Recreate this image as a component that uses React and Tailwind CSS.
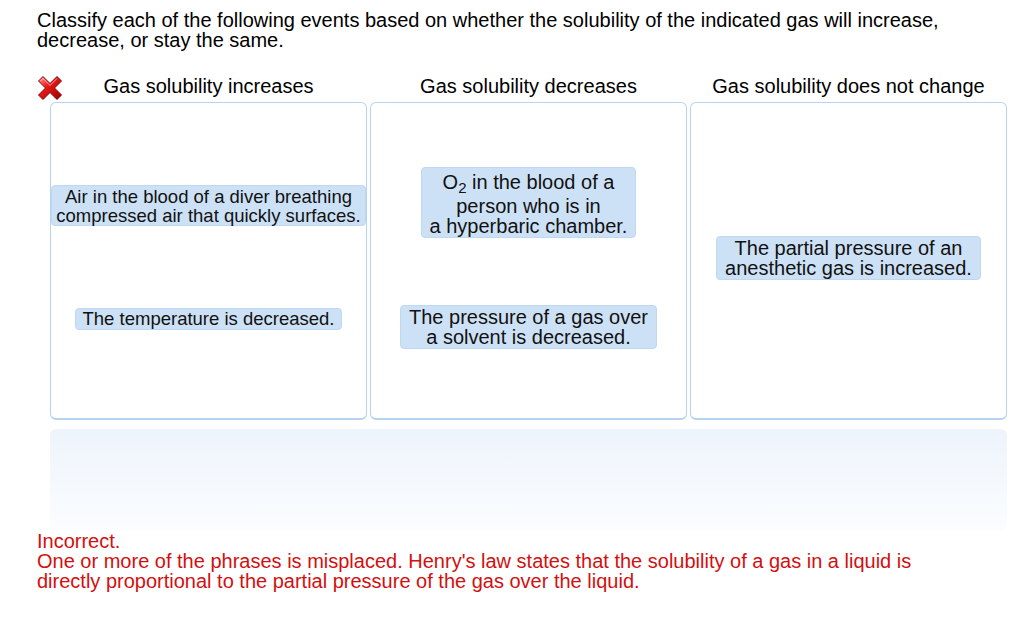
import React from "react";

const font = { fontFamily: '"Liberation Sans", Arial, sans-serif' };

// red bevelled cross shown next to a wrong answer
const WrongMark = () => (
  <svg width="28" height="28" viewBox="0 0 28 28" className="absolute left-[-14px] top-[-2px]">
    <defs>
      <linearGradient id="xr" x1="0" y1="0" x2="1" y2="1">
        <stop offset="0" stopColor="#ff9c9c" />
        <stop offset="0.4" stopColor="#e81818" />
        <stop offset="1" stopColor="#990000" />
      </linearGradient>
    </defs>
    <path
      d="M2.5 7 L7 2.5 L14 9.5 L21 2.5 L25.5 7 L18.5 14 L25.5 21 L21 25.5 L14 18.5 L7 25.5 L2.5 21 L9.5 14 Z"
      fill="url(#xr)"
      stroke="#8a0000"
      strokeWidth="1"
      strokeLinejoin="round"
    />
    <path d="M4.5 7 L7 4.5 L14 11.5 L21 4.5" stroke="#ffd6d6" strokeWidth="1" fill="none" opacity="0.75" />
  </svg>
);

const Chip = ({ children, className = "" }) => (
  <div
    className={
      "bg-[#cde1f6] border border-[#bfd8f1] rounded-[4px] text-center text-[#111] " + className
    }
  >
    {children}
  </div>
);

const Bin = ({ children, className = "" }) => (
  <div
    className={
      "h-[318px] rounded-[6px] border border-[#b6d3f2] border-b-2 bg-white flex flex-col items-center " +
      className
    }
  >
    {children}
  </div>
);

export default function App() {
  return (
    <main className="w-[1024px] h-[630px] bg-white pl-[37px] pt-[10px] text-black" style={font}>
      <p className="text-[20px] leading-[20px]">
        Classify each of the following events based on whether the solubility of the indicated gas will increase,
        <br />
        decrease, or stay the same.
      </p>

      <div className="relative ml-[13px] w-[957px] mt-[26px]">
        <WrongMark />
        <div className="grid grid-cols-3 gap-[3px] text-[20px] leading-[20px] text-center">
          <div>Gas solubility increases</div>
          <div>Gas solubility decreases</div>
          <div>Gas solubility does not change</div>
        </div>

        <div className="grid grid-cols-3 gap-[3px] mt-[6px]">
          <Bin>
            <Chip className="mt-[82px] w-full text-[18.5px] leading-[19px] pt-[1px]">
              Air in the blood of a diver breathing
              <br />
              compressed air that quickly surfaces.
            </Chip>
            <Chip className="mt-[82px] px-[7px] text-[18.5px] leading-[20px]">The temperature is decreased.</Chip>
          </Bin>
          <Bin>
            <Chip className="mt-[64px] px-[8px] text-[20px] leading-[20px] pb-[1px]">
              <div className="leading-[27px] pt-[1px]">
                O<sub>2</sub> in the blood of a
              </div>
              person who is in
              <br />
              a hyperbaric chamber.
            </Chip>
            <Chip className="mt-[67px] px-[8px] text-[20px] leading-[20px] py-[1px]">
              The pressure of a gas over
              <br />
              a solvent is decreased.
            </Chip>
          </Bin>
          <Bin>
            <Chip className="mt-[133px] px-[8px] text-[20px] leading-[20px] py-[1px]">
              The partial pressure of an
              <br />
              anesthetic gas is increased.
            </Chip>
          </Bin>
        </div>

        <div className="mt-[9px] h-[102px] rounded-[6px] bg-gradient-to-b from-[#eef4fc] to-[#fbfdff]" />
      </div>

      <div className="text-[20px] leading-[20px] text-[#d40f0f]">
        <p>Incorrect.</p>
        <p>
          One or more of the phrases is misplaced. Henry's law states that the solubility of a gas in a liquid is
          <br />
          directly proportional to the partial pressure of the gas over the liquid.
        </p>
      </div>
    </main>
  );
}
